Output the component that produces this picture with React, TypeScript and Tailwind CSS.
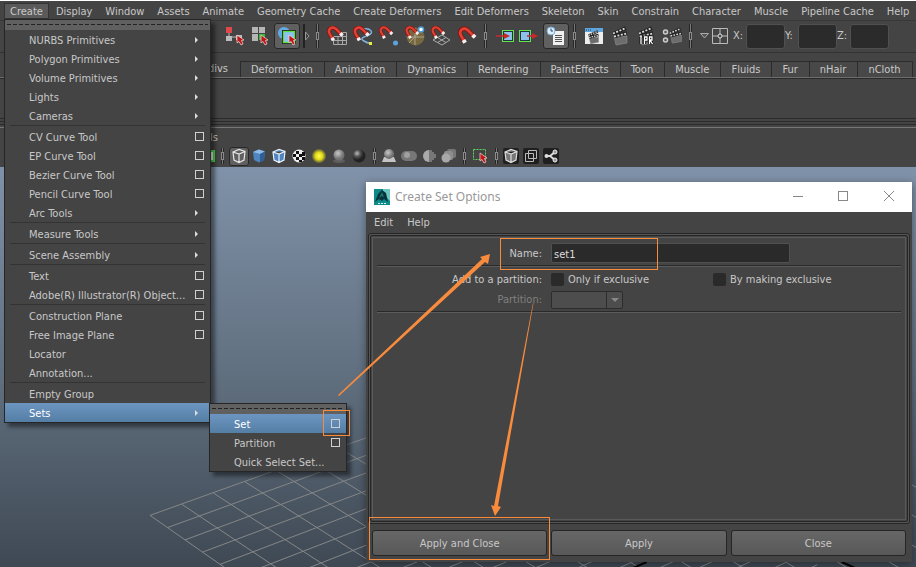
import React from "react";

type MenuEntry = { label: string; kind?: "sub" | "box" } | "line";

const menuBar = [
  "Create", "Display", "Window", "Assets", "Animate", "Geometry Cache", "Create Deformers",
  "Edit Deformers", "Skeleton", "Skin", "Constrain", "Character", "Muscle", "Pipeline Cache", "Help",
];

const shelves = [
  "Deformation", "Animation", "Dynamics", "Rendering", "PaintEffects", "Toon", "Muscle",
  "Fluids", "Fur", "nHair", "nCloth",
];

const createMenu: MenuEntry[] = [
  { label: "NURBS Primitives", kind: "sub" },
  { label: "Polygon Primitives", kind: "sub" },
  { label: "Volume Primitives", kind: "sub" },
  { label: "Lights", kind: "sub" },
  { label: "Cameras", kind: "sub" },
  "line",
  { label: "CV Curve Tool", kind: "box" },
  { label: "EP Curve Tool", kind: "box" },
  { label: "Bezier Curve Tool", kind: "box" },
  { label: "Pencil Curve Tool", kind: "box" },
  { label: "Arc Tools", kind: "sub" },
  "line",
  { label: "Measure Tools", kind: "sub" },
  "line",
  { label: "Scene Assembly", kind: "sub" },
  "line",
  { label: "Text", kind: "box" },
  { label: "Adobe(R) Illustrator(R) Object...", kind: "box" },
  "line",
  { label: "Construction Plane", kind: "box" },
  { label: "Free Image Plane", kind: "box" },
  { label: "Locator" },
  { label: "Annotation..." },
  "line",
  { label: "Empty Group" },
  { label: "Sets", kind: "sub" },
];

const setsMenu: MenuEntry[] = [
  { label: "Set", kind: "box" },
  { label: "Partition", kind: "box" },
  { label: "Quick Select Set..." },
];

function Menu({ items, active }: { items: MenuEntry[]; active: string }) {
  return (
    <div className="border border-[#262626] bg-[#444] shadow-[4px_4px_4px_rgba(0,0,0,0.45)]">
      <div className="h-[10px] bg-[#606060] px-[2px] pt-1">
        <svg className="block h-px w-full" aria-hidden="true">
          <line x1="0" y1="0.5" x2="100%" y2="0.5" stroke="#222" strokeDasharray="4 2" />
        </svg>
      </div>
      {items.map((it, i) =>
        it === "line" ? (
          <div key={i} className="ml-[5px] mr-[5px] h-[2px] border-t border-[#333]" />
        ) : (
          <div
            key={i}
            className={
              "flex h-[19px] items-center pr-[6px] " +
              (it.label === active ? "bg-linear-to-b from-[#6c96c1] to-[#557ea5] text-white" : "")
            }
          >
            <button className="flex h-full flex-1 items-center justify-between whitespace-nowrap pl-6 pt-[2px]">
              {it.label}
              {it.kind === "sub" && (
                <svg className="mb-[2px] mr-[6px]" width="3" height="6" aria-hidden="true">
                  <path d="M0 0L3 3L0 6Z" fill="#ddd" />
                </svg>
              )}
            </button>
            {it.kind === "box" && (
              <button aria-label={it.label + " options"} className="size-[9px] border border-[#d0d0d0]" />
            )}
          </div>
        ),
      )}
    </div>
  );
}

function Slot({ children, w = "w-[26px]", h = "h-[26px]", on = false, label }: { children: React.ReactNode; w?: string; h?: string; on?: boolean; label: string }) {
  return (
    <button
      aria-label={label}
      className={"flex shrink-0 items-center justify-center " + w + " " + h + (on ? " rounded-[3px] border border-[#282828] bg-[#606060]" : "")}
    >
      {children}
    </button>
  );
}

function Handle({ w = "w-[10px]", h = 24 }: { w?: string; h?: number }) {
  return (
    <span className={"flex shrink-0 justify-center " + w}>
      <svg width="5" height={h} aria-hidden="true">
        <path d={`M2.5 0V${h}`} stroke="#262626" strokeWidth="3" />
        <path d={`M2.5 0V${h}`} stroke="#7a7a7a" />
        <rect x="1.500" y={h / 2 - 3.5} width="2" height="7" fill="#333" stroke="#8a8a8a" />
      </svg>
    </span>
  );
}

function Pointer({ x, y }: { x: number; y: number }) {
  return (
    <path
      transform={`translate(${x} ${y})`}
      d="M0 0L0 8L2 6.5L4 10L6 9L4.500 5.500L7 5Z"
      fill="#c01818"
      stroke="#f4dcdc"
      strokeWidth="0.700"
    />
  );
}

function Magnet() {
  return (
    <g>
      <path d="M6 13.500L2.500 7.500C0.500 3 5 -0.500 9 3L15 9" fill="none" stroke="#8d1410" strokeWidth="4.200" />
      <path d="M6 13.500L2.500 7.500C0.500 3 5 -0.500 9 3L15 9" fill="none" stroke="#e04236" strokeWidth="2.400" />
      <path d="M5 11.800L6.500 14.400M13.300 7.300L15.500 9.500" stroke="#f2f2f2" strokeWidth="3.600" />
    </g>
  );
}

function Clapper() {
  return (
    <g>
      <path d="M3 10L16 10V17L5 19Z" fill="#6d6d6d" stroke="#888" strokeWidth="0.700" />
      <path d="M2 8L15 2M3 10.500L16 7" stroke="#222" strokeWidth="3.600" />
      <path d="M2 7.500L15 2M3 10.500L16 7.500" stroke="#d8d8d8" strokeWidth="1.800" strokeDasharray="2 1.500" />
    </g>
  );
}

function Pic({ children, size = 20 }: { children: React.ReactNode; size?: number }) {
  return (
    <svg width={size} height={size} viewBox={`0 0 ${size} ${size}`} className="shrink-0" aria-hidden="true">
      {children}
    </svg>
  );
}

function Toolbar() {
  return (
    <div className="flex h-8 shrink-0 items-center border-t border-[#383838] pb-px pl-[222px]">
      <Slot label="Select by hierarchy">
        <Pic>
          <path d="M4 6V14M5 11H13" stroke="#bbb" />
          <rect x="1" y="1" width="6" height="6" fill="#e0484a" />
          <rect x="1" y="10" width="6" height="5" fill="#bbb" />
          <rect x="11" y="9" width="6" height="5" fill="#bbb" />
          <Pointer x={12} y={9} />
        </Pic>
      </Slot>
      <Slot label="Select by object">
        <Pic>
          <path d="M1 1H7V7H1ZM8 1H14V7H8ZM1 8H7V15H1Z" fill="#b5b5b5" />
          <rect x="8" y="8" width="6" height="6" fill="#37b93c" />
          <Pointer x={10} y={9} />
        </Pic>
      </Slot>
      <Slot label="Select by component" on>
        <Pic>
          <circle cx="7" cy="7" r="6" fill="#62abe4" />
          <rect x="6.500" y="5.500" width="11" height="11" fill="#8bc4ee" stroke="#222" strokeWidth="3" />
          <rect x="6.500" y="5.500" width="11" height="11" fill="#8bc4ee" stroke="#5ce03d" strokeWidth="1.300" />
          <Pointer x={12} y={9} />
        </Pic>
      </Slot>
      <span className="flex w-3 shrink-0 items-center">
        <svg width="10" height="24" aria-hidden="true">
          <path d="M4 0V24" stroke="#222" strokeWidth="2" />
          <path d="M5.500 8L9 12L5.500 16Z" fill="#3d3d3d" stroke="#999" />
        </svg>
      </span>
      <Handle />
      <Slot label="Snap to grids" w="ml-[2px] w-[26px]">
        <Pic>
          <path d="M6.500 10.500H19.500V18.500H6.500ZM6 14.500H20M11 10V19M15.500 6V19M11 6.500H19.500V12" fill="none" stroke="#aaa" />
          <Magnet />
        </Pic>
      </Slot>
      <Slot label="Snap to curves">
        <Pic>
          <path d="M11 3C18 2 21 7 16 9S6 12 11 15S16 17 18 17" fill="none" stroke="#7eb4e2" strokeWidth="1.500" />
          <Magnet />
          <rect x="16" y="16" width="3" height="3" fill="#efe744" />
        </Pic>
      </Slot>
      <Slot label="Snap to points">
        <Pic>
          <g transform="scale(0.850)"><Magnet /></g>
          <circle cx="16.500" cy="17" r="2.500" fill="#5da3db" />
        </Pic>
      </Slot>
      <Slot label="Snap to projected center">
        <Pic>
          <circle cx="10.500" cy="10.500" r="9" fill="#77683f" />
          <path d="M2 11H19M10 2V19M4 17L16 4" stroke="#aea48c" />
          <g transform="scale(0.850)"><Magnet /></g>
          <circle cx="16" cy="3.500" r="2.500" fill="#fff" stroke="#4b9bd8" strokeWidth="1.500" />
        </Pic>
      </Slot>
      <Slot label="Snap to view planes">
        <Pic>
          <path d="M2 14L11 9L19 14L11 19ZM6.500 11.500L15 16.500M6.500 16.500L15 11.500" fill="none" stroke="#aaa" />
          <g transform="scale(0.850)"><Magnet /></g>
        </Pic>
      </Slot>
      <Slot label="Make live"><Pic><g transform="translate(1 1) scale(1.100)"><Magnet /></g></Pic></Slot>
      <Handle />
      <Slot label="Input operations" w="ml-1 w-[22px]">
        <Pic>
          <rect x="7.500" y="4.500" width="11" height="11" fill="#234" stroke="#62e34c" />
          <rect x="9" y="6" width="8" height="8" fill="#8cc2ec" />
          <path d="M1 10H10" stroke="#c9272d" strokeWidth="1.500" />
          <path d="M9 7L15 10L9 13Z" fill="#c9272d" />
        </Pic>
      </Slot>
      <Slot label="Output operations" w="w-[23px]">
        <Pic>
          <rect x="1.500" y="4.500" width="11" height="11" fill="#234" stroke="#62e34c" />
          <rect x="3" y="6" width="8" height="8" fill="#8cc2ec" />
          <path d="M9 10H16" stroke="#c9272d" strokeWidth="1.500" />
          <path d="M14 7L20 10L14 13Z" fill="#c9272d" />
        </Pic>
      </Slot>
      <Slot label="Construction history" on w="ml-1 w-[26px]">
        <Pic>
          <path d="M7 5H18V19H7Z" fill="#f0f0f0" />
          <path d="M9 9.500H16M9 11.500H16M9 13.500H16M9 15.500H16" stroke="#555" />
          <circle cx="5" cy="5" r="4" fill="#dceefb" stroke="#7aacd6" />
          <path d="M5 2.500V5H7" fill="none" stroke="#246" />
        </Pic>
      </Slot>
      <Handle />
      <Slot label="Render view" w="ml-[2px] w-[26px]">
        <Pic>
          <rect x="1" y="2" width="18" height="16" fill="#eee" />
          <rect x="1" y="2" width="18" height="4" fill="#5fa5de" />
          <path d="M2 4H8" stroke="#246" strokeDasharray="1 1" />
          <g transform="translate(3 4) scale(0.720)"><Clapper /></g>
        </Pic>
      </Slot>
      <Slot label="Render current frame"><Pic><g transform="translate(1 0)"><Clapper /></g></Pic></Slot>
      <Slot label="IPR render">
        <Pic>
          <g transform="translate(1 0)"><Clapper /></g>
          <path d="M5 11V18M8.500 18V11H11V14H9M13.500 18V11H16V14H14L16.500 18" fill="none" stroke="#111" strokeWidth="3" />
          <path d="M5 11V18M8.500 18V11H11V14H9M13.500 18V11H16V14H14L16.500 18" fill="none" stroke="#fff" strokeWidth="1.300" />
        </Pic>
      </Slot>
      <Slot label="Render settings">
        <Pic>
          <g transform="translate(6 1) scale(0.850)"><Clapper /></g>
          <circle cx="3.500" cy="6" r="2" fill="#555" stroke="#ccc" strokeWidth="1.500" />
          <circle cx="3.500" cy="14" r="2" fill="#555" stroke="#ccc" strokeWidth="1.500" />
        </Pic>
      </Slot>
      <Handle />
      <Slot label="Input line mode" w="ml-[2px] w-[15px]">
        <svg width="9" height="6" aria-hidden="true"><path d="M0.500 0.500H8.500L4.500 5Z" fill="#555" stroke="#aaa" /></svg>
      </Slot>
      <Slot label="Absolute transform" w="w-4">
        <Pic size={16}>
          <path d="M0.500 0.500H15.500V15.500H0.500ZM8 1V15M1 8H15" fill="none" stroke="#bbb" />
          <circle cx="8" cy="8" r="2" fill="#444" stroke="#ddd" />
        </Pic>
      </Slot>
      <div className="ml-[5px] flex shrink-0">
        {["X:", "Y:", "Z:"].map((axis) => (
          <label key={axis} className="flex items-center">
            <span className="w-[13px]">{axis}</span>
            <input className="h-[25px] w-[39px] rounded-[3px] border border-[#505050] bg-[#2b2b2b]" />
          </label>
        ))}
      </div>
    </div>
  );
}

function Cube({ fill, edge }: { fill: string; edge: string }) {
  return (
    <path d="M2 4L8 1.500L14 3.500L13 12L8 14.500L3 12ZM2 4L8 6L14 3.500M8 6V14" fill={fill} stroke={edge} strokeWidth="1.200" />
  );
}

function PanelBar() {
  return (
    <div className="flex h-5 shrink-0 items-center pb-[2px] pl-[205px]">
      <span className="h-3 w-[10px] border-2 border-[#4be04b] bg-white" />
      <Handle w="w-[14px]" h={16} />
      <Slot label="Wireframe" w="w-5" h="h-[19px]" on><Pic size={16}><Cube fill="none" edge="#e6e6e6" /></Pic></Slot>
      <Slot label="Smooth shade" w="w-5" h="h-[19px]">
        <Pic size={16}>
          <path d="M2 4L8 1.500L14 3.500L13 12L8 14.500L3 12Z" fill="#4f86c0" />
          <path d="M2 4L8 1.500L14 3.500L9 6Z" fill="#8dbbe6" />
          <path d="M9 6L14 3.500L13 12L9 14.500Z" fill="#2f5f96" />
        </Pic>
      </Slot>
      <Slot label="Wireframe on shaded" w="w-5" h="h-[19px]"><Pic size={16}><Cube fill="#4f86c0" edge="#e8f2fc" /></Pic></Slot>
      <Slot label="Textured" w="w-5" h="h-[19px]">
        <Pic size={16}>
          <circle cx="8" cy="8" r="6.500" fill="#eee" />
          <path d="M5 3H8V6H5ZM11 4H14V8H11ZM2 6H5V9H2ZM8 6H11V9H8ZM5 9H8V12H5ZM11 9H14V12H11ZM8 12H11V14H8Z" fill="#111" />
        </Pic>
      </Slot>
      <Slot label="Use all lights" w="w-5" h="h-[19px]">
        <Pic size={16}><circle cx="8" cy="8" r="7.500" fill="url(#lamp)" /></Pic>
      </Slot>
      <Slot label="Shadows" w="w-5" h="h-[19px]">
        <Pic size={16}><ellipse cx="8" cy="13" rx="6" ry="2" fill="#5d5d5d" /><circle cx="8" cy="7" r="5.500" fill="url(#ballLight)" /></Pic>
      </Slot>
      <Slot label="Occlusion" w="w-5" h="h-[19px]"><Pic size={16}><circle cx="8" cy="8" r="6.500" fill="url(#ballDark)" /></Pic></Slot>
      <Handle h={16} />
      <Slot label="Isolate" w="w-5" h="h-[19px]">
        <Pic size={16}><path d="M1 14L3 9H13L15 14Z" fill="#c4c4c4" /><circle cx="8" cy="6" r="5" fill="url(#ballLight)" /></Pic>
      </Slot>
      <Slot label="Motion blur" w="w-5" h="h-[19px]"><Pic size={16}><rect x="0" y="3" width="16" height="10" rx="5" fill="#777" /><circle cx="6" cy="7" r="3" fill="#a0a0a0" /></Pic></Slot>
      <Slot label="Anti-aliasing" w="w-5" h="h-[19px]">
        <Pic size={16}><path d="M8 2A6 6 0 0 0 8 14Z" fill="#aaa" /><path d="M8 2H11V4H13V6H15V10H13V12H11V14H8Z" fill="#777" /></Pic>
      </Slot>
      <Slot label="Depth of field" w="w-5" h="h-[19px]">
        <Pic size={16}><rect x="6" y="1" width="9" height="9" rx="2" fill="#777" /><rect x="3" y="3" width="9" height="9" rx="2" fill="#8d8d8d" /><circle cx="5" cy="10" r="4.500" fill="#a8a8a8" /></Pic>
      </Slot>
      <Handle h={16} />
      <Slot label="Select region" w="w-[22px]" h="h-[19px]">
        <Pic size={16}><rect x="1.500" y="1.500" width="12" height="10" fill="none" stroke="#5cd65c" strokeDasharray="2 1" /><Pointer x={8} y={5} /></Pic>
      </Slot>
      <Handle h={16} />
      <Slot label="Isolate select" w="w-5" h="h-[19px]"><Pic size={16}><rect width="16" height="16" rx="2" fill="#1f1f1f" /><Cube fill="#777" edge="#ddd" /></Pic></Slot>
      <Slot label="X-ray" w="w-5" h="h-[19px]"><Pic size={16}><rect width="16" height="16" rx="2" fill="#1f1f1f" /><path d="M2.500 5.500H10.500V13.500H2.500ZM5.500 2.500H13.500V10.500H5.500Z" fill="none" stroke="#bbb" /></Pic></Slot>
      <Slot label="X-ray joints" w="w-5" h="h-[19px]">
        <Pic size={16}><rect width="16" height="16" rx="2" fill="#1f1f1f" /><path d="M3 8H7L12 4M7 8L12 12" fill="none" stroke="#ddd" strokeWidth="2" /><circle cx="3.500" cy="8" r="2" fill="#ddd" /><circle cx="12" cy="4" r="2" fill="#999" stroke="#eee" /><circle cx="12" cy="12" r="2" fill="#999" stroke="#eee" /></Pic>
      </Slot>
    </div>
  );
}

function Grid() {
  const fall = Array.from({ length: 17 }, (_, k) => {
    const x = 30 + 95 * k, y = 265 - 33.5 * k;
    const a = 30 + 149 * k, b = 240 + 155 * k;
    return [x, y, a + ((b - a) * 165) / 147, 430];
  });
  const rise = Array.from({ length: 26 }, (_, k) => {
    const dx = 30 + 149 * k - (240 + 155 * (k - 4));
    const x = 30 + 52.5 * k, y = 265 + 36.8 * k;
    return [x, y, x + dx * 3.5, y - 147 * 3.5];
  });
  return (
    <svg className="absolute left-[140px] top-[260px]" width="776" height="140" viewBox="0 0 2328 420" overflow="visible" aria-hidden="true">
      {[...fall, ...rise].map(([x1, y1, x2, y2], i) => (
        <line key={i} x1={x1} y1={y1} x2={x2} y2={y2} stroke="#858787" strokeWidth="3" />
      ))}
      <path d="M1475 425L1520 405M2105 405L2150 425" stroke="#000" strokeWidth="6" />
    </svg>
  );
}

function PushButton({ children }: { children: React.ReactNode }) {
  return (
    <button className="h-[26px] flex-1 rounded-[3px] border border-[#262626] bg-linear-to-b from-[#676767] to-[#585858] pt-[2px]">
      {children}
    </button>
  );
}

function Divider() {
  return <div className="mx-1 h-[2px] border-t border-[#292929] bg-[#5b5b5b]" />;
}

function Dialog() {
  return (
    <div className="flex flex-col bg-[#444] shadow-[0_2px_8px_rgba(0,0,0,0.4)]">
      <div className="flex h-[30px] items-center bg-white pl-2 text-[#999]">
        <svg width="16" height="16" aria-hidden="true">
          <rect width="16" height="16" fill="#0f8a8a" />
          <path d="M9 0H16V12L9 5Z" fill="#6cc5bf" />
          <path d="M1 13L4 5L8 1L12 4L14 13L10 10L8 12L5 10Z" fill="#06343a" />
          <path d="M5 9L8 3L10 8L8 7Z" fill="#1b7577" />
          <path d="M4 14.500H12" stroke="#d8f3f0" strokeDasharray="2 1" />
        </svg>
        <h1 className="ml-[5px] flex-1 font-['Noto_Sans',sans-serif] text-[12px]">Create Set Options</h1>
        <button aria-label="Minimize" className="flex w-[45px] justify-center"><Pic size={12}><path d="M0 5.500H10" stroke="#888" /></Pic></button>
        <button aria-label="Maximize" className="flex w-[45px] justify-center"><Pic size={12}><rect x="0.500" y="0.500" width="9" height="9" fill="none" stroke="#888" /></Pic></button>
        <button aria-label="Close window" className="flex w-[46px] justify-center"><Pic size={12}><path d="M1 0L11 10M11 0L1 10" stroke="#888" /></Pic></button>
      </div>
      <div className="flex h-[21px] items-center gap-[14px] px-2">
        <button>Edit</button>
        <button>Help</button>
      </div>
      <div className="mx-[2px] flex h-[291px] flex-col rounded-[3px] border border-[#262626] bg-[#555] p-px">
        <div className="flex flex-1 flex-col rounded-[2px] border border-[#262626] bg-[#444] p-px">
          <div className="flex flex-1 flex-col border border-[#5a5a5a] pt-[5px]">
            <div className="flex h-[22px] items-start">
              <label htmlFor="setName" className="w-[169px] shrink-0 text-right leading-[22px]">Name:</label>
              <input
                id="setName"
                defaultValue="set1"
                className="ml-[9px] h-5 w-[239px] rounded-[2px] border border-[#505050] bg-[#2a2a2a] px-[2px] pt-[2px] text-[#ddd]"
              />
            </div>
            <Divider />
            <div className="flex h-6 items-center">
              <span className="w-[169px] shrink-0 pt-[2px] text-right">Add to a partition:</span>
              <label className="ml-[9px] flex w-[162px] items-center gap-1">
                <input type="checkbox" className="size-[13px] appearance-none rounded-[2px] bg-[#2a2a2a]" />
                <span className="pt-[2px]">Only if exclusive</span>
              </label>
              <label className="flex items-center gap-1">
                <input type="checkbox" className="size-[13px] appearance-none rounded-[2px] bg-[#2a2a2a]" />
                <span className="pt-[2px]">By making exclusive</span>
              </label>
            </div>
            <div className="flex h-5 items-start">
              <label htmlFor="partition" className="w-[169px] shrink-0 text-right leading-[18px] text-[#808080]">Partition:</label>
              <div className="ml-[9px] grid w-[72px]">
                <select id="partition" disabled className="col-start-1 row-start-1 h-[18px] appearance-none rounded-[2px] border border-[#2c2c2c] bg-[#4d4d4d]" />
                <span className="pointer-events-none col-start-1 row-start-1 flex w-[17px] items-center justify-center justify-self-end border-l border-[#2c2c2c]">
                  <svg width="8" height="4" aria-hidden="true"><path d="M0 0H8L4 4Z" fill="#888" /></svg>
                </span>
              </div>
            </div>
            <Divider />
          </div>
        </div>
      </div>
      <div className="flex gap-1 px-[6px] py-[6px]">
        <PushButton>Apply and Close</PushButton>
        <PushButton>Apply</PushButton>
        <PushButton>Close</PushButton>
      </div>
    </div>
  );
}

export default function App() {
  return (
    <div className="relative flex h-screen flex-col overflow-hidden bg-[#444] font-['DejaVu_Sans_Condensed','DejaVu_Sans',sans-serif] text-[11px] leading-[14px] text-[#c8c8c8]">
      <svg width="0" height="0" className="absolute" aria-hidden="true">
        <defs>
          <radialGradient id="ballLight" cx="0.400" cy="0.350"><stop offset="0" stopColor="#c8c8c8" /><stop offset="1" stopColor="#727272" /></radialGradient>
          <radialGradient id="ballDark" cx="0.350" cy="0.300"><stop offset="0" stopColor="#bbb" /><stop offset="0.500" stopColor="#555" /><stop offset="1" stopColor="#222" /></radialGradient>
          <radialGradient id="lamp"><stop offset="0" stopColor="#ffff50" /><stop offset="0.500" stopColor="#e0d818" /><stop offset="1" stopColor="#e0d818" stopOpacity="0" /></radialGradient>
        </defs>
      </svg>
      <nav className="flex h-5 shrink-0 items-center gap-px border-t border-white pl-1 pt-px">
        {menuBar.map((m, i) => (
          <button key={m} className={"h-4 whitespace-nowrap px-[6px] pt-px " + (i === 0 ? "bg-[#5a5a5a] outline outline-[#333] -outline-offset-1" : "")}>
            {m}
          </button>
        ))}
      </nav>
      <Toolbar />
      <div className="flex h-[26px] shrink-0 items-end overflow-hidden border-b border-t border-b-[#6c6c6c] border-t-[#333]">
        <div className="flex w-[241px] shrink-0 justify-end">
          <button className="h-4 border-r border-[#2b2b2b] px-3">Subdivs</button>
        </div>
        {shelves.map((s) => (
          <button key={s} className="h-4 shrink-0 border-r border-t border-[#2b2b2b] bg-[#484848] pl-[10px] pr-[11px] leading-[14px]">{s}</button>
        ))}
      </div>
      <div className="h-[41px] shrink-0 border-b border-t border-[#2b2b2b]" />
      <div className="h-[2px] shrink-0" />
      <div className="h-1 shrink-0 border-y border-[#2b2b2b]" />
      <div className="h-[2px] shrink-0" />
      <div className="flex h-5 shrink-0 items-center border-t border-[#777]">
        <div className="flex w-[218px] justify-end"><button>Panels</button></div>
      </div>
      <PanelBar />
      <main className="relative min-h-0 flex-1 overflow-hidden bg-linear-to-b from-[#8092a9] via-[#627181] via-50% to-[#3f4954]">
        <Grid />
      </main>

      <div className="absolute left-1 top-[19px] w-[207px]"><Menu items={createMenu} active="Sets" /></div>
      <div className="absolute left-[209px] top-[403px] w-[138px]"><Menu items={setsMenu} active="Set" /></div>
      <div className="absolute left-[366px] right-1 top-[182px]"><Dialog /></div>
      <svg className="pointer-events-none absolute left-0 top-0" width="916" height="567" aria-hidden="true">
        <g fill="none" stroke="#f98b3c">
          <rect x="323.500" y="410.500" width="26" height="25" />
          <rect x="500.500" y="238.500" width="157" height="31" />
          <rect x="369.500" y="517.500" width="180" height="42" />
        </g>
        <path d="M338 395L482 259L480 257L490 254L488 264L485 262L339 396Z" fill="#f98b3c" />
        <path d="M533 303L494 506L491 505L495 516L501 507L498 506L533.500 303Z" fill="#f98b3c" />
      </svg>
    </div>
  );
}
